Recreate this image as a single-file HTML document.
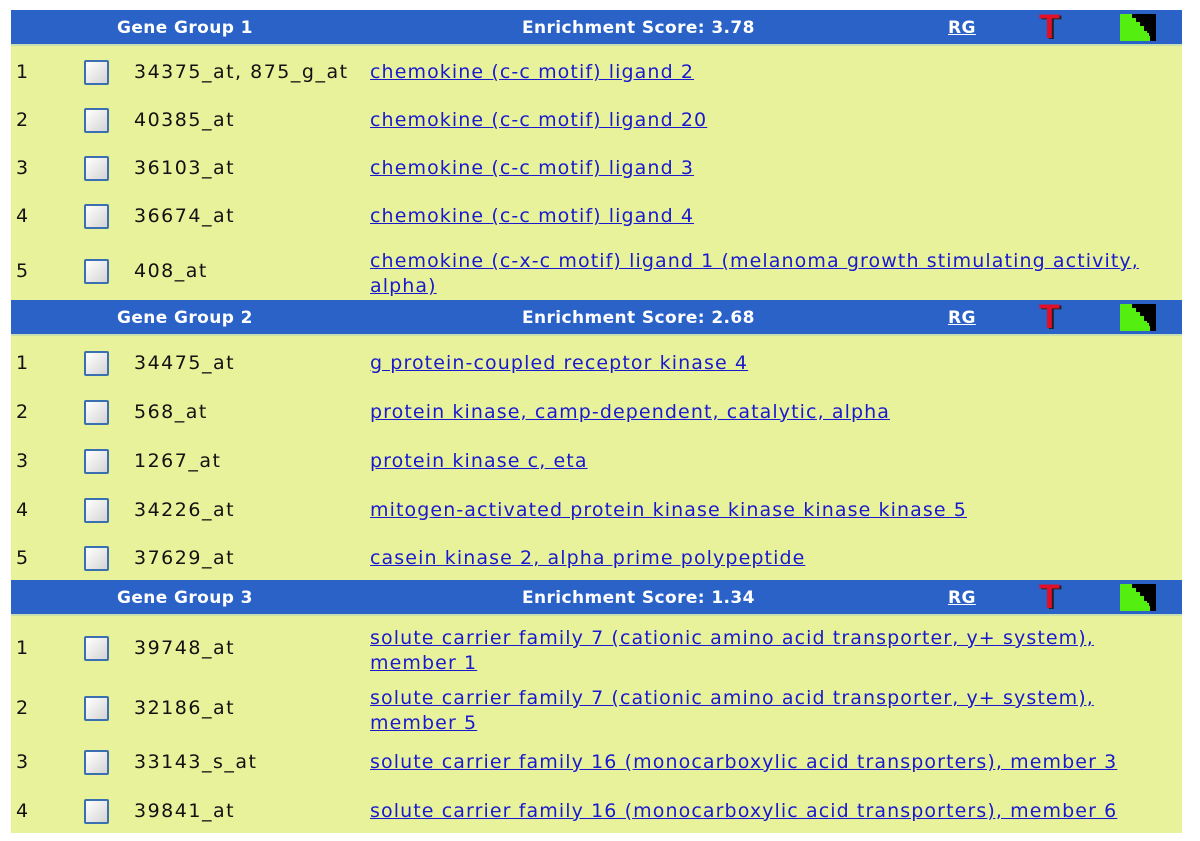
<!DOCTYPE html>
<html><head><meta charset="utf-8"><style>
body{margin:0;background:#fff;width:1200px;height:841px;overflow:hidden;font-family:"DejaVu Sans","Liberation Sans",sans-serif;}
.t{position:absolute;left:11px;top:10px;width:1171px;background:#e8f29a;}
.h{position:relative;height:36px;background:#2a62c8;color:#fff;font-weight:bold;font-size:17px;letter-spacing:0.4px;border-bottom:2px solid #c8e0b0;box-sizing:border-box}
.h span{position:absolute;top:8px;}
.r{position:relative;font-size:19px;letter-spacing:1.1px;color:#111;}
.r>*{position:absolute;top:50%;transform:translateY(-40%);white-space:nowrap}
.n{left:5px;}
.c{left:73px;width:21px;height:21px;border:2px solid #3a6fb0;background:linear-gradient(135deg,#fff,#d4d4d4);border-radius:2px}
.i{left:123px;letter-spacing:1.5px}
.r a{left:359px;color:#1a1acc;text-decoration:underline;line-height:25px}
.h .rg{text-decoration:underline;left:937px}
.h .T{left:1028px;color:#e0102a;font-size:34px;top:-2px;font-weight:900;text-shadow:2px 1px 0 #222;font-family:"Liberation Sans",sans-serif}
.g{position:absolute;left:1109px;top:4px;width:36px;height:27px;background:#55ee11;overflow:hidden}
</style></head><body><div class="t">

<div class="h"><span style="left:106px">Gene Group 1</span><span style="left:511px">Enrichment Score: 3.78</span><span class="rg">RG</span><span class="T">T</span><div class="g"><svg width="36" height="27"><path d="M12 0H36V27H30V22H27V17H24V12H20V8H16V4H12Z" fill="#000"/><path d="M20 14h3v3h-3zM26 19h3v3h-3zM17 8h3v3h-3z" fill="#55ee11"/></svg></div></div>
<div class="r" style="height:48px"><span class="n">1</span><span class="c"></span><span class="i">34375_at, 875_g_at</span><a>chemokine (c-c motif) ligand 2</a></div>
<div class="r" style="height:48px"><span class="n">2</span><span class="c"></span><span class="i">40385_at</span><a>chemokine (c-c motif) ligand 20</a></div>
<div class="r" style="height:48px"><span class="n">3</span><span class="c"></span><span class="i">36103_at</span><a>chemokine (c-c motif) ligand 3</a></div>
<div class="r" style="height:48px"><span class="n">4</span><span class="c"></span><span class="i">36674_at</span><a>chemokine (c-c motif) ligand 4</a></div>
<div class="r" style="height:62px"><span class="n">5</span><span class="c"></span><span class="i">408_at</span><a>chemokine (c-x-c motif) ligand 1 (melanoma growth stimulating activity,<br>alpha)</a></div>

<div class="h"><span style="left:106px">Gene Group 2</span><span style="left:511px">Enrichment Score: 2.68</span><span class="rg">RG</span><span class="T">T</span><div class="g"><svg width="36" height="27"><path d="M12 0H36V27H30V22H27V17H24V12H20V8H16V4H12Z" fill="#000"/><path d="M20 14h3v3h-3zM26 19h3v3h-3zM17 8h3v3h-3z" fill="#55ee11"/></svg></div></div>
<div class="r" style="height:49px"><span class="n">1</span><span class="c"></span><span class="i">34475_at</span><a>g protein-coupled receptor kinase 4</a></div>
<div class="r" style="height:49px"><span class="n">2</span><span class="c"></span><span class="i">568_at</span><a>protein kinase, camp-dependent, catalytic, alpha</a></div>
<div class="r" style="height:49px"><span class="n">3</span><span class="c"></span><span class="i">1267_at</span><a>protein kinase c, eta</a></div>
<div class="r" style="height:49px"><span class="n">4</span><span class="c"></span><span class="i">34226_at</span><a>mitogen-activated protein kinase kinase kinase kinase 5</a></div>
<div class="r" style="height:48px"><span class="n">5</span><span class="c"></span><span class="i">37629_at</span><a>casein kinase 2, alpha prime polypeptide</a></div>

<div class="h"><span style="left:106px">Gene Group 3</span><span style="left:511px">Enrichment Score: 1.34</span><span class="rg">RG</span><span class="T">T</span><div class="g"><svg width="36" height="27"><path d="M12 0H36V27H30V22H27V17H24V12H20V8H16V4H12Z" fill="#000"/><path d="M20 14h3v3h-3zM26 19h3v3h-3zM17 8h3v3h-3z" fill="#55ee11"/></svg></div></div>
<div class="r" style="height:60px"><span class="n">1</span><span class="c"></span><span class="i">39748_at</span><a>solute carrier family 7 (cationic amino acid transporter, y+ system),<br>member 1</a></div>
<div class="r" style="height:60px"><span class="n">2</span><span class="c"></span><span class="i">32186_at</span><a>solute carrier family 7 (cationic amino acid transporter, y+ system),<br>member 5</a></div>
<div class="r" style="height:48px"><span class="n">3</span><span class="c"></span><span class="i">33143_s_at</span><a>solute carrier family 16 (monocarboxylic acid transporters), member 3</a></div>
<div class="r" style="height:49px"><span class="n">4</span><span class="c"></span><span class="i">39841_at</span><a>solute carrier family 16 (monocarboxylic acid transporters), member 6</a></div>
</div>
</body></html>
